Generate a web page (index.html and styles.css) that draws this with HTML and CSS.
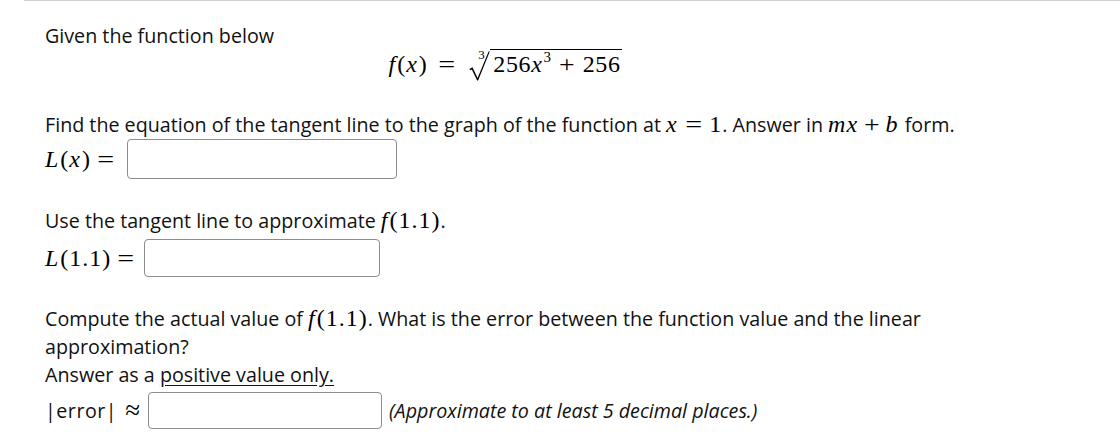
FILE: index.html
```html
<!DOCTYPE html>
<html lang="en">
<head>
<meta charset="utf-8">
<title>Tangent line question</title>
<link rel="stylesheet" href="styles.css">
</head>
<body>
<div class="page">
  <div class="question">
    <p class="line">Given the function below</p>
    <div class="display">
      <span class="m"><i>f</i>(<i>x</i>)</span><span class="rel">=</span><span class="root"><span class="index">3</span><svg class="surd" width="22" height="30" viewBox="0 0 22 30"><path d="M1.5 18 L4.4 16.3 L9.6 27 L20.6 0.4 L21.8 0.4 L10.1 29.6 L9.2 29.6 L3.8 18.6 L2 19.2 Z" fill="#000"/></svg><span class="radicand">256<i>x</i><sup>3</sup><span class="bin">+</span>256</span></span>
    </div>
    <p class="line">Find the equation of the tangent line to the graph of the function at <span class="m"><i>x</i><span class="rel">=</span>1</span>. Answer in <span class="m"><i>mx</i><span class="bin">+</span><i>b</i></span> form.</p>
    <div class="answer">
      <span class="m"><i>L</i>(<i>x</i>)<span class="rel rel-end">=</span></span>
      <span class="box box-lx"></span>
    </div>
    <p class="line gap">Use the tangent line to approximate <span class="m"><i>f</i>(1.1)</span>.</p>
    <div class="answer answer-b">
      <span class="m"><i>L</i>(1.1)<span class="rel rel-end">=</span></span>
      <span class="box box-l11"></span>
    </div>
    <p class="line gap">Compute the actual value of <span class="m"><i>f</i>(1.1)</span>. What is the error between the function value and the linear approximation?</p>
    <p class="line">Answer as a <span class="u">positive value only.</span></p>
    <div class="answer answer-c">
      <span class="abs">|error|</span><span class="m approx">≈</span>
      <span class="box box-err"></span>
      <span class="hint">(Approximate to at least 5 decimal places.)</span>
    </div>
  </div>
</div>
</body>
</html>
```

FILE: styles.css
```css
html, body {
  margin: 0;
  padding: 0;
  background: #fff;
}

.page {
  margin-left: 24px;
  border-top: 1px solid #cfcfcf;
  padding: 21px 0 0 21px;
  font-family: "Open Sans", "Liberation Sans", sans-serif;
  font-size: 19.7px;
  color: #111;
}

.question {
  width: 916px;
}

.line {
  margin: 0;
  line-height: 28px;
}

.gap {
  margin-top: 28px;
}

.m {
  font-family: "Liberation Serif", "DejaVu Serif", serif;
  font-size: 24px;
  line-height: 20px;
  letter-spacing: 1px;
  color: #000;
  white-space: nowrap;
}

.m i {
  font-style: italic;
  padding-right: 1px;
}

.rel {
  display: inline-block;
  margin: 0 8px;
  transform: scaleX(1.25);
}

.rel-end {
  margin-right: 0;
}

.bin {
  display: inline-block;
  margin: 0 6px;
  transform: scaleX(1.15);
}

.display {
  display: flex;
  justify-content: center;
  align-items: flex-end;
  height: 25px;
  margin: 2px 0 34px;
  padding-left: 4px;
  font-family: "Liberation Serif", "DejaVu Serif", serif;
  font-size: 24px;
  line-height: 26px;
  color: #000;
}

.display .m {
  line-height: 26px;
}

.display .rel {
  margin: 0 14px 0 12px;
}

.root {
  position: relative;
  display: inline-flex;
  align-items: flex-end;
  padding-left: 1px;
}

.index {
  position: absolute;
  left: 11px;
  top: -1px;
  font-size: 13px;
  line-height: 13px;
}

.surd {
  display: block;
  margin-bottom: -4px;
}

.radicand {
  border-top: 1.4px solid #000;
  padding: 1px 1px 0 3px;
  line-height: 26px;
  letter-spacing: 0.6px;
}

.radicand sup {
  font-size: 15px;
  vertical-align: 10px;
  line-height: 0;
  margin-left: 1px;
}

.radicand .bin {
  margin: 0 9px 0 8px;
}

.answer {
  display: flex;
  align-items: center;
  gap: 10px;
  height: 40px;
}

.answer-b {
  margin-top: 4px;
  height: 38px;
}

.answer-c {
  margin-top: 2px;
  height: 38px;
  gap: 0;
}

.box {
  display: block;
  box-sizing: border-box;
  border: 1px solid #8c8c8c;
  border-radius: 4px;
  background: #fff;
}

.box-lx {
  width: 270px;
  height: 40px;
  margin-left: 3px;
}

.box-l11 {
  width: 236px;
  height: 38px;
}

.box-err {
  width: 234px;
  height: 37px;
  margin-left: 8px;
}

.abs {
  letter-spacing: 0.5px;
}

.approx {
  margin-left: 8px;
  font-size: 27px;
  letter-spacing: 0;
}

.hint {
  font-style: italic;
  margin-left: 7px;
}

.u {
  text-decoration: underline;
  text-underline-offset: 3px;
}
```
